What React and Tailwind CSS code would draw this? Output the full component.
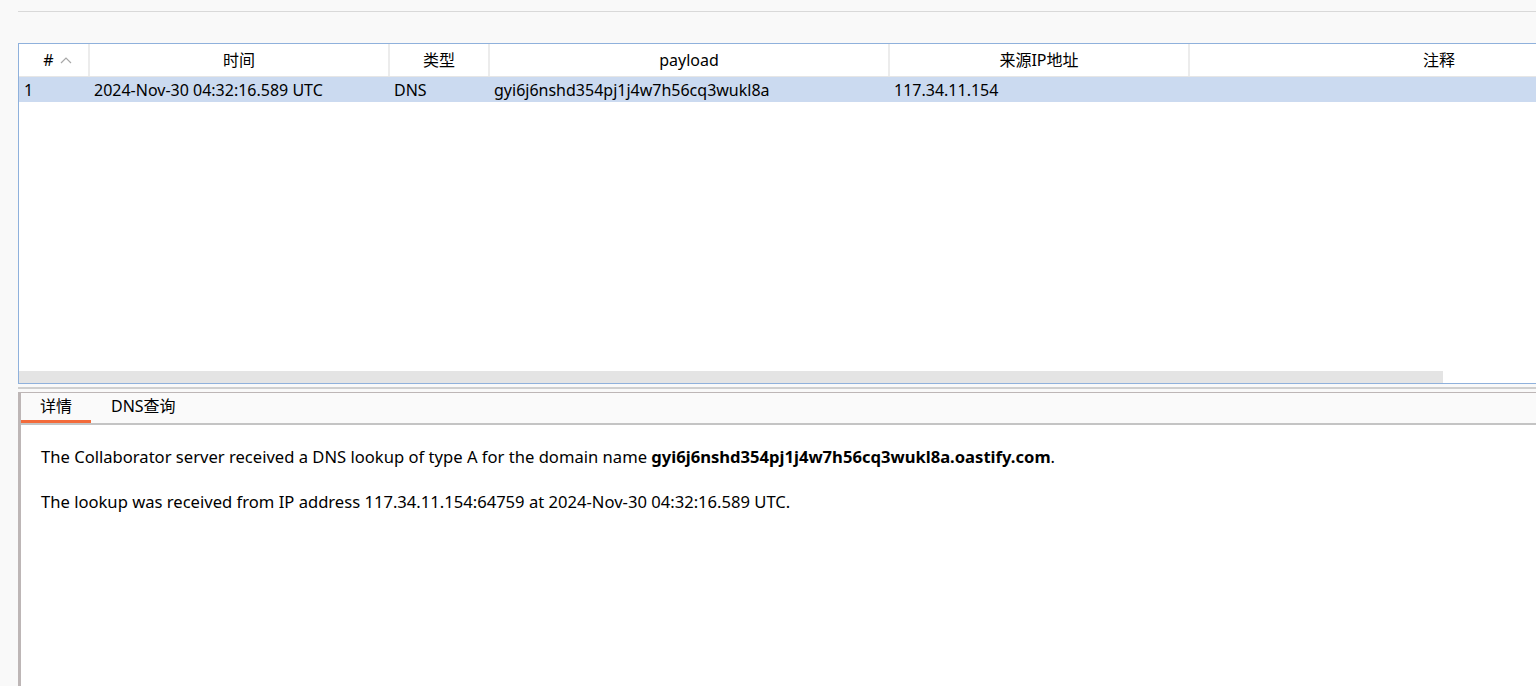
import React from "react";

const cols = [
  { label: "#", w: "w-[71px]" },
  { label: "时间", w: "w-[300px]" },
  { label: "类型", w: "w-[100px]" },
  { label: "payload", w: "w-[400px]" },
  { label: "来源IP地址", w: "w-[300px]" },
  { label: "注释", w: "w-[500px]" },
];

const row = ["1", "2024-Nov-30 04:32:16.589 UTC", "DNS", "gyi6j6nshd354pj1j4w7h56cq3wukl8a", "117.34.11.154", ""];

function SortUp() {
  return (
    <svg width="12" height="8" viewBox="0 0 12 8" className="ml-[6px]">
      <path d="M1 7 L6 2 L11 7" fill="none" stroke="#a8a8a8" strokeWidth="1.2" />
    </svg>
  );
}

export default function App() {
  const font = { fontFamily: '"Segoe UI", "Noto Sans", "Noto Sans CJK SC", sans-serif' };
  return (
    <div className="h-[686px] w-[1536px] overflow-hidden bg-[#f9f9f9] text-black" style={font}>
      <div className="ml-[18px] h-[12px] border-b border-[#d9d9d9]" />
      <div className="h-[31px]" />

      {/* request table */}
      <div className="ml-[18px] flex h-[341px] flex-col border border-r-0 border-[#8fb1dc] bg-white">
        <div className="flex h-[33px] shrink-0 border-b border-[#e6e6e6] text-[16px]">
          {cols.map((c, i) => (
            <div
              key={c.label}
              className={`${c.w} flex shrink-0 items-center justify-center border-r-2 border-[#ececec]`}
            >
              {i === 0 ? (
                <span className="flex items-center pl-[8px]">
                  # <SortUp />
                </span>
              ) : (
                c.label
              )}
            </div>
          ))}
        </div>
        <div className="flex h-[25px] shrink-0 items-center bg-[#cbdaf0] text-[16px]">
          {row.map((v, i) => (
            <div key={i} className={`${cols[i].w} shrink-0 whitespace-nowrap pt-[1px] ${i === 0 ? "pl-[5px]" : "pl-[4px]"}`}>
              {v}
            </div>
          ))}
        </div>
        <div className="flex-1" />
        <div className="h-[12px] w-[1424px] shrink-0 bg-[#e4e4e4]" />
      </div>

      <div className="ml-[18px] mt-[3px] h-[2px] bg-[#cfcfcf]" />

      {/* details panel */}
      <div className="ml-[18px] mt-[3px] flex h-[296px] flex-col border-l-[3px] border-t border-[#bdb6b6]">
        <div className="flex h-[32px] shrink-0 items-end border-b-2 border-[#c4c4c4] bg-[#fafafa] text-[16px]">
          <div className="flex h-full w-[70px] flex-col items-center justify-between">
            <span className="pt-[1px]">详情</span>
            <div className="h-[3px] w-full bg-[#f36b3b]" />
          </div>
          <div className="flex h-full items-start pl-[20px] pt-[1px]">DNS查询</div>
        </div>
        <div className="flex-1 bg-white pl-[20px] pt-[21px] text-[16.6px] leading-[22px]">
          <p>
            The Collaborator server received a DNS lookup of type A for the domain name{" "}
            <b>gyi6j6nshd354pj1j4w7h56cq3wukl8a.oastify.com</b>.
          </p>
          <p className="mt-[23px]">
            The lookup was received from IP address 117.34.11.154:64759 at 2024-Nov-30 04:32:16.589 UTC.
          </p>
        </div>
      </div>
    </div>
  );
}
